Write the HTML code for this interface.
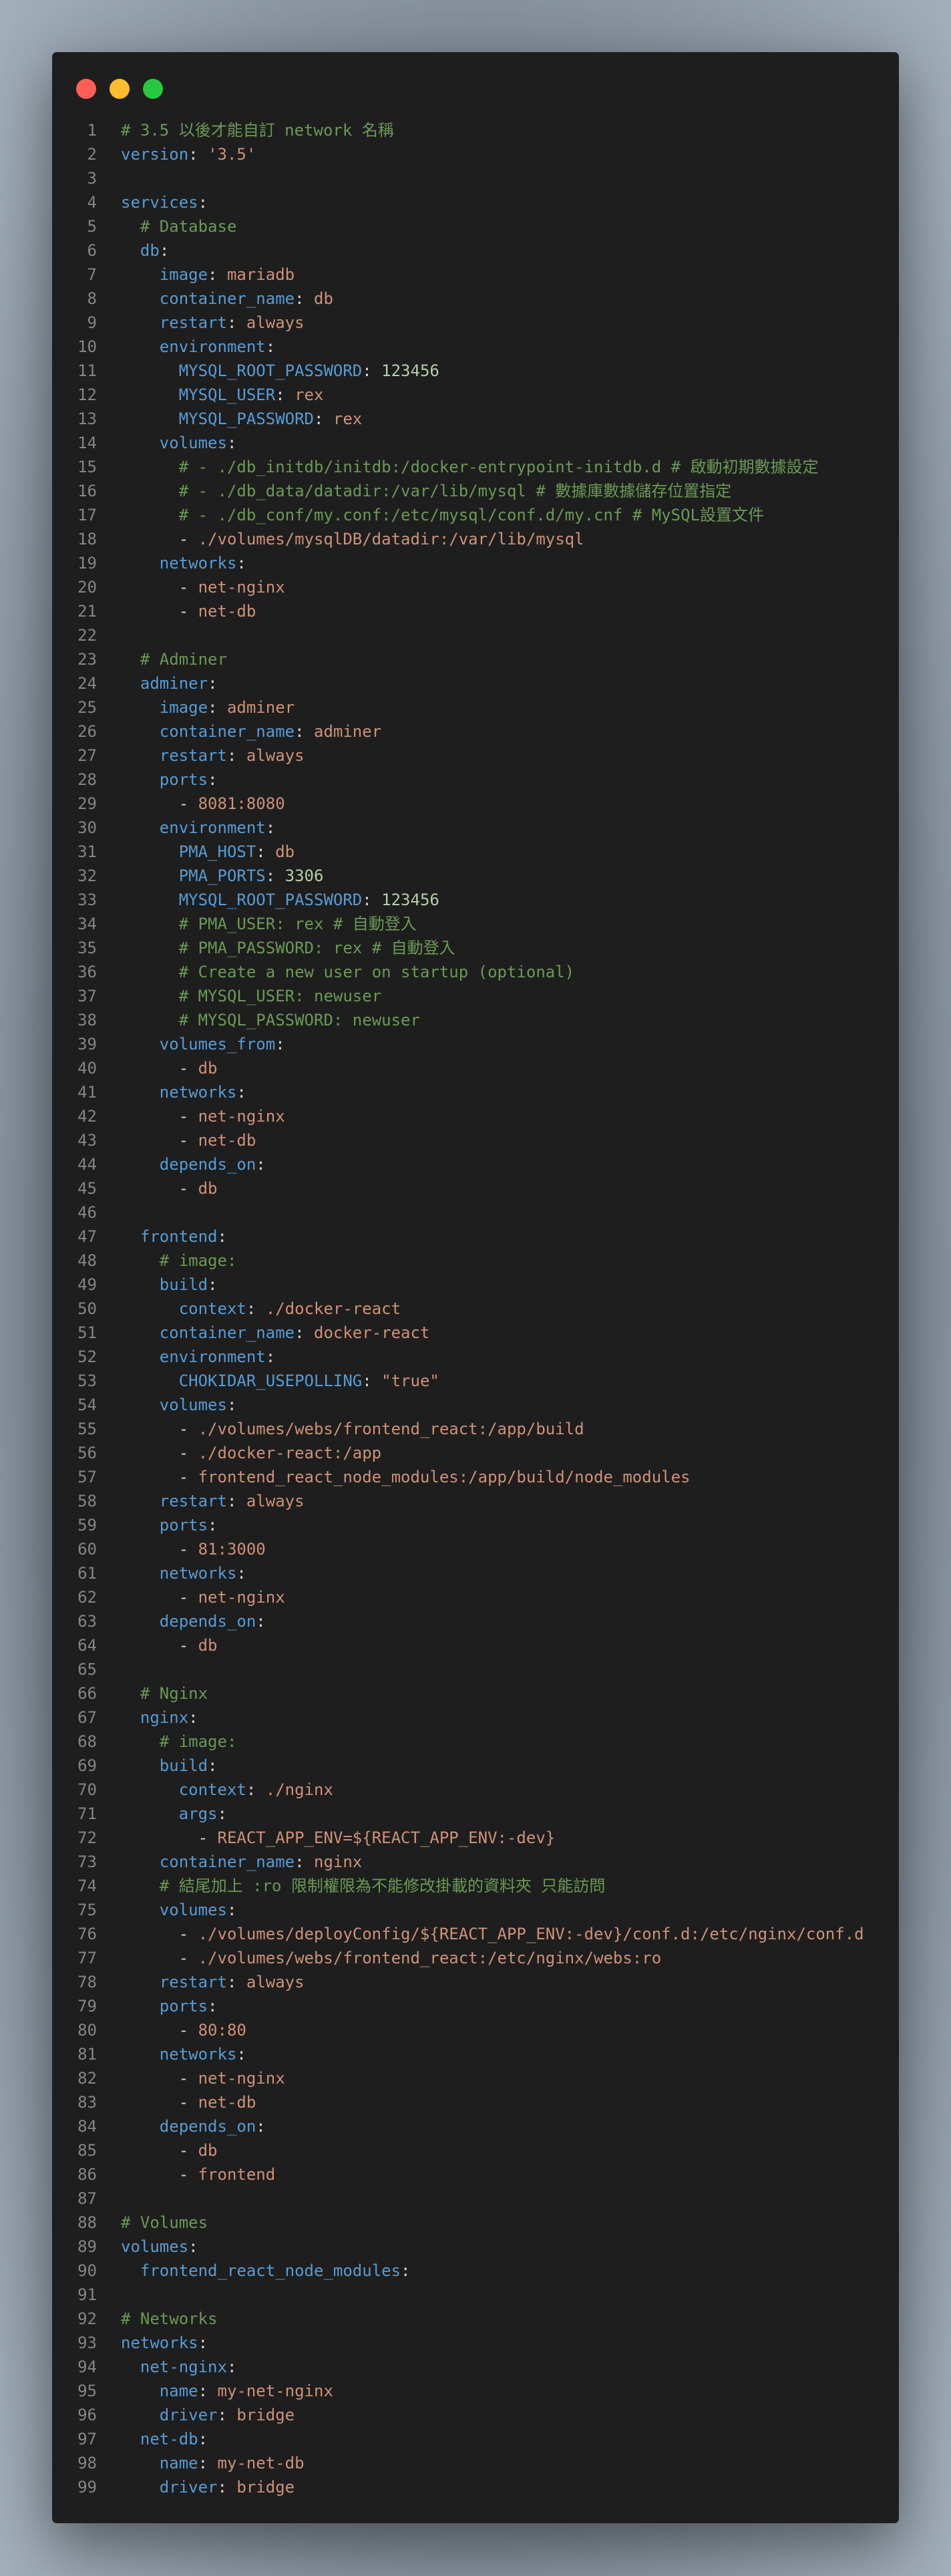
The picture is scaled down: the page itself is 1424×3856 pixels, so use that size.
<!DOCTYPE html>
<html><head><meta charset="utf-8">
<style>
html,body{margin:0;padding:0}
body{width:1424px;height:3856px;position:relative;overflow:hidden;
background:radial-gradient(ellipse at 50% 50%,#5f6a74 0%,#7b8691 60%,#a3afba 100%);}
.win{position:absolute;left:78px;top:78px;width:1268px;height:3699px;background:#1e1e1e;border-radius:7px;
box-shadow:0 30px 90px rgba(0,0,0,0.45);}
.dot{position:absolute;top:118px;width:30px;height:30px;border-radius:50%}
.code{position:absolute;left:110px;top:177px;
font-family:"DejaVu Sans Mono","Noto Sans CJK TC",monospace;font-size:24px;line-height:36px;color:#d4d4d4;white-space:normal}
.l{display:flex;height:36px;white-space:pre}
.ln{width:35px;text-align:right;color:#858585;margin-right:36px;flex:none}
.k{color:#569cd6}.s{color:#ce9178}.c{color:#6a9955}.n{color:#b5cea8}
</style></head><body>
<div class="win"></div>
<div class="dot" style="left:114px;background:#ff5f57"></div>
<div class="dot" style="left:164px;background:#febc2e"></div>
<div class="dot" style="left:214px;background:#28c840"></div>
<div class="code">
<div class="l"><span class="ln">1</span><span class="c"># 3.5 以後才能自訂 network 名稱</span></div>
<div class="l"><span class="ln">2</span><span><span class="k">version</span>: <span class="s">'3.5'</span></span></div>
<div class="l"><span class="ln">3</span><span></span></div>
<div class="l"><span class="ln">4</span><span><span class="k">services</span>:</span></div>
<div class="l"><span class="ln">5</span><span>  <span class="c"># Database</span></span></div>
<div class="l"><span class="ln">6</span><span>  <span class="k">db</span>:</span></div>
<div class="l"><span class="ln">7</span><span>    <span class="k">image</span>: <span class="s">mariadb</span></span></div>
<div class="l"><span class="ln">8</span><span>    <span class="k">container_name</span>: <span class="s">db</span></span></div>
<div class="l"><span class="ln">9</span><span>    <span class="k">restart</span>: <span class="s">always</span></span></div>
<div class="l"><span class="ln">10</span><span>    <span class="k">environment</span>:</span></div>
<div class="l"><span class="ln">11</span><span>      <span class="k">MYSQL_ROOT_PASSWORD</span>: <span class="n">123456</span></span></div>
<div class="l"><span class="ln">12</span><span>      <span class="k">MYSQL_USER</span>: <span class="s">rex</span></span></div>
<div class="l"><span class="ln">13</span><span>      <span class="k">MYSQL_PASSWORD</span>: <span class="s">rex</span></span></div>
<div class="l"><span class="ln">14</span><span>    <span class="k">volumes</span>:</span></div>
<div class="l"><span class="ln">15</span><span>      <span class="c"># - ./db_initdb/initdb:/docker-entrypoint-initdb.d # 啟動初期數據設定</span></span></div>
<div class="l"><span class="ln">16</span><span>      <span class="c"># - ./db_data/datadir:/var/lib/mysql # 數據庫數據儲存位置指定</span></span></div>
<div class="l"><span class="ln">17</span><span>      <span class="c"># - ./db_conf/my.conf:/etc/mysql/conf.d/my.cnf # MySQL設置文件</span></span></div>
<div class="l"><span class="ln">18</span><span>      - <span class="s">./volumes/mysqlDB/datadir:/var/lib/mysql</span></span></div>
<div class="l"><span class="ln">19</span><span>    <span class="k">networks</span>:</span></div>
<div class="l"><span class="ln">20</span><span>      - <span class="s">net-nginx</span></span></div>
<div class="l"><span class="ln">21</span><span>      - <span class="s">net-db</span></span></div>
<div class="l"><span class="ln">22</span><span></span></div>
<div class="l"><span class="ln">23</span><span>  <span class="c"># Adminer</span></span></div>
<div class="l"><span class="ln">24</span><span>  <span class="k">adminer</span>:</span></div>
<div class="l"><span class="ln">25</span><span>    <span class="k">image</span>: <span class="s">adminer</span></span></div>
<div class="l"><span class="ln">26</span><span>    <span class="k">container_name</span>: <span class="s">adminer</span></span></div>
<div class="l"><span class="ln">27</span><span>    <span class="k">restart</span>: <span class="s">always</span></span></div>
<div class="l"><span class="ln">28</span><span>    <span class="k">ports</span>:</span></div>
<div class="l"><span class="ln">29</span><span>      - <span class="s">8081:8080</span></span></div>
<div class="l"><span class="ln">30</span><span>    <span class="k">environment</span>:</span></div>
<div class="l"><span class="ln">31</span><span>      <span class="k">PMA_HOST</span>: <span class="s">db</span></span></div>
<div class="l"><span class="ln">32</span><span>      <span class="k">PMA_PORTS</span>: <span class="n">3306</span></span></div>
<div class="l"><span class="ln">33</span><span>      <span class="k">MYSQL_ROOT_PASSWORD</span>: <span class="n">123456</span></span></div>
<div class="l"><span class="ln">34</span><span>      <span class="c"># PMA_USER: rex # 自動登入</span></span></div>
<div class="l"><span class="ln">35</span><span>      <span class="c"># PMA_PASSWORD: rex # 自動登入</span></span></div>
<div class="l"><span class="ln">36</span><span>      <span class="c"># Create a new user on startup (optional)</span></span></div>
<div class="l"><span class="ln">37</span><span>      <span class="c"># MYSQL_USER: newuser</span></span></div>
<div class="l"><span class="ln">38</span><span>      <span class="c"># MYSQL_PASSWORD: newuser</span></span></div>
<div class="l"><span class="ln">39</span><span>    <span class="k">volumes_from</span>:</span></div>
<div class="l"><span class="ln">40</span><span>      - <span class="s">db</span></span></div>
<div class="l"><span class="ln">41</span><span>    <span class="k">networks</span>:</span></div>
<div class="l"><span class="ln">42</span><span>      - <span class="s">net-nginx</span></span></div>
<div class="l"><span class="ln">43</span><span>      - <span class="s">net-db</span></span></div>
<div class="l"><span class="ln">44</span><span>    <span class="k">depends_on</span>:</span></div>
<div class="l"><span class="ln">45</span><span>      - <span class="s">db</span></span></div>
<div class="l"><span class="ln">46</span><span></span></div>
<div class="l"><span class="ln">47</span><span>  <span class="k">frontend</span>:</span></div>
<div class="l"><span class="ln">48</span><span>    <span class="c"># image:</span></span></div>
<div class="l"><span class="ln">49</span><span>    <span class="k">build</span>:</span></div>
<div class="l"><span class="ln">50</span><span>      <span class="k">context</span>: <span class="s">./docker-react</span></span></div>
<div class="l"><span class="ln">51</span><span>    <span class="k">container_name</span>: <span class="s">docker-react</span></span></div>
<div class="l"><span class="ln">52</span><span>    <span class="k">environment</span>:</span></div>
<div class="l"><span class="ln">53</span><span>      <span class="k">CHOKIDAR_USEPOLLING</span>: <span class="s">"true"</span></span></div>
<div class="l"><span class="ln">54</span><span>    <span class="k">volumes</span>:</span></div>
<div class="l"><span class="ln">55</span><span>      - <span class="s">./volumes/webs/frontend_react:/app/build</span></span></div>
<div class="l"><span class="ln">56</span><span>      - <span class="s">./docker-react:/app</span></span></div>
<div class="l"><span class="ln">57</span><span>      - <span class="s">frontend_react_node_modules:/app/build/node_modules</span></span></div>
<div class="l"><span class="ln">58</span><span>    <span class="k">restart</span>: <span class="s">always</span></span></div>
<div class="l"><span class="ln">59</span><span>    <span class="k">ports</span>:</span></div>
<div class="l"><span class="ln">60</span><span>      - <span class="s">81:3000</span></span></div>
<div class="l"><span class="ln">61</span><span>    <span class="k">networks</span>:</span></div>
<div class="l"><span class="ln">62</span><span>      - <span class="s">net-nginx</span></span></div>
<div class="l"><span class="ln">63</span><span>    <span class="k">depends_on</span>:</span></div>
<div class="l"><span class="ln">64</span><span>      - <span class="s">db</span></span></div>
<div class="l"><span class="ln">65</span><span></span></div>
<div class="l"><span class="ln">66</span><span>  <span class="c"># Nginx</span></span></div>
<div class="l"><span class="ln">67</span><span>  <span class="k">nginx</span>:</span></div>
<div class="l"><span class="ln">68</span><span>    <span class="c"># image:</span></span></div>
<div class="l"><span class="ln">69</span><span>    <span class="k">build</span>:</span></div>
<div class="l"><span class="ln">70</span><span>      <span class="k">context</span>: <span class="s">./nginx</span></span></div>
<div class="l"><span class="ln">71</span><span>      <span class="k">args</span>:</span></div>
<div class="l"><span class="ln">72</span><span>        - <span class="s">REACT_APP_ENV=${REACT_APP_ENV:-dev}</span></span></div>
<div class="l"><span class="ln">73</span><span>    <span class="k">container_name</span>: <span class="s">nginx</span></span></div>
<div class="l"><span class="ln">74</span><span>    <span class="c"># 結尾加上 :ro 限制權限為不能修改掛載的資料夾 只能訪問</span></span></div>
<div class="l"><span class="ln">75</span><span>    <span class="k">volumes</span>:</span></div>
<div class="l"><span class="ln">76</span><span>      - <span class="s">./volumes/deployConfig/${REACT_APP_ENV:-dev}/conf.d:/etc/nginx/conf.d</span></span></div>
<div class="l"><span class="ln">77</span><span>      - <span class="s">./volumes/webs/frontend_react:/etc/nginx/webs:ro</span></span></div>
<div class="l"><span class="ln">78</span><span>    <span class="k">restart</span>: <span class="s">always</span></span></div>
<div class="l"><span class="ln">79</span><span>    <span class="k">ports</span>:</span></div>
<div class="l"><span class="ln">80</span><span>      - <span class="s">80:80</span></span></div>
<div class="l"><span class="ln">81</span><span>    <span class="k">networks</span>:</span></div>
<div class="l"><span class="ln">82</span><span>      - <span class="s">net-nginx</span></span></div>
<div class="l"><span class="ln">83</span><span>      - <span class="s">net-db</span></span></div>
<div class="l"><span class="ln">84</span><span>    <span class="k">depends_on</span>:</span></div>
<div class="l"><span class="ln">85</span><span>      - <span class="s">db</span></span></div>
<div class="l"><span class="ln">86</span><span>      - <span class="s">frontend</span></span></div>
<div class="l"><span class="ln">87</span><span></span></div>
<div class="l"><span class="ln">88</span><span class="c"># Volumes</span></div>
<div class="l"><span class="ln">89</span><span><span class="k">volumes</span>:</span></div>
<div class="l"><span class="ln">90</span><span>  <span class="k">frontend_react_node_modules</span>:</span></div>
<div class="l"><span class="ln">91</span><span></span></div>
<div class="l"><span class="ln">92</span><span class="c"># Networks</span></div>
<div class="l"><span class="ln">93</span><span><span class="k">networks</span>:</span></div>
<div class="l"><span class="ln">94</span><span>  <span class="k">net-nginx</span>:</span></div>
<div class="l"><span class="ln">95</span><span>    <span class="k">name</span>: <span class="s">my-net-nginx</span></span></div>
<div class="l"><span class="ln">96</span><span>    <span class="k">driver</span>: <span class="s">bridge</span></span></div>
<div class="l"><span class="ln">97</span><span>  <span class="k">net-db</span>:</span></div>
<div class="l"><span class="ln">98</span><span>    <span class="k">name</span>: <span class="s">my-net-db</span></span></div>
<div class="l"><span class="ln">99</span><span>    <span class="k">driver</span>: <span class="s">bridge</span></span></div>
</div>
</body></html>
